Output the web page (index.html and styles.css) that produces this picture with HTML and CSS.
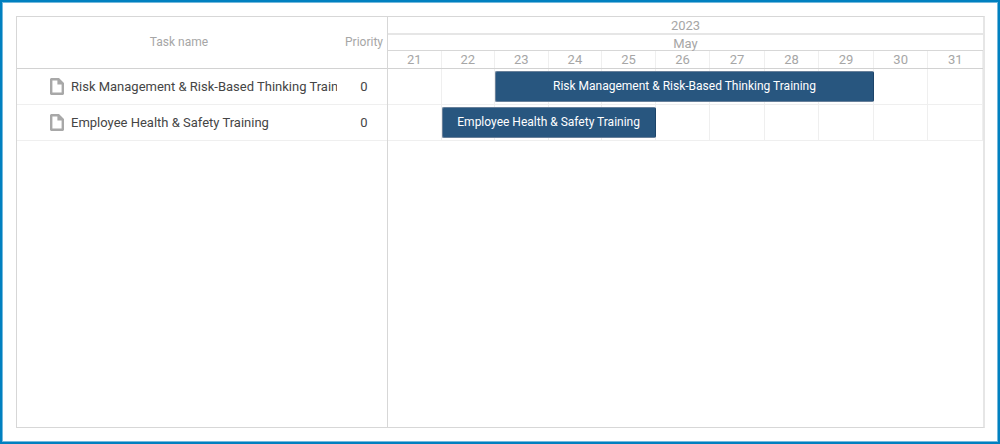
FILE: index.html
```html
<!DOCTYPE html>
<html lang="en">
<head>
    <meta charset="UTF-8">
    <meta name="viewport" content="width=device-width, initial-scale=1.0">
    <title>Training Schedule</title>
    <link rel="stylesheet" href="styles.css">
</head>
<body>

    <div class="page">
        <div class="gantt">

            <div class="grid">
                <table class="task-table">
                    <thead>
                        <tr>
                            <th class="col-name">Task name</th>
                            <th class="col-priority">Priority</th>
                        </tr>
                    </thead>
                    <tbody>
                        <tr>
                            <td class="col-name">
                                <div class="task-name">
                                    <svg class="file-icon" viewBox="0 0 14 17" width="14" height="17"><path fill-rule="evenodd" d="M1 0H9L14 5V16L13 17H1L0 16V1ZM2.4 2.4V14.6H11.6V6.6H7.4V2.4Z"/></svg>
                                    <span>Risk Management &amp; Risk-Based Thinking Training</span>
                                </div>
                            </td>
                            <td class="col-priority">0</td>
                        </tr>
                        <tr>
                            <td class="col-name">
                                <div class="task-name">
                                    <svg class="file-icon" viewBox="0 0 14 17" width="14" height="17"><path fill-rule="evenodd" d="M1 0H9L14 5V16L13 17H1L0 16V1ZM2.4 2.4V14.6H11.6V6.6H7.4V2.4Z"/></svg>
                                    <span>Employee Health &amp; Safety Training</span>
                                </div>
                            </td>
                            <td class="col-priority">0</td>
                        </tr>
                    </tbody>
                </table>
            </div>

            <div class="timeline">
                <div class="scale">
                    <div class="scale-year">2023</div>
                    <div class="scale-month">May</div>
                    <div class="days scale-days">
                        <div>21</div>
                        <div>22</div>
                        <div>23</div>
                        <div>24</div>
                        <div>25</div>
                        <div>26</div>
                        <div>27</div>
                        <div>28</div>
                        <div>29</div>
                        <div>30</div>
                        <div>31</div>
                    </div>
                </div>

                <div class="days task-row">
                    <div class="days cells"><i></i><i></i><i></i><i></i><i></i><i></i><i></i><i></i><i></i><i></i><i></i></div>
                    <div class="bar bar-risk">Risk Management &amp; Risk-Based Thinking Training</div>
                </div>
                <div class="days task-row">
                    <div class="days cells"><i></i><i></i><i></i><i></i><i></i><i></i><i></i><i></i><i></i><i></i><i></i></div>
                    <div class="bar bar-safety">Employee Health &amp; Safety Training</div>
                </div>
            </div>

        </div>
    </div>

</body>
</html>
```
FILE: styles.css
```css
* {
    box-sizing: border-box;
}

body {
    margin: 0;
    font-family: Roboto, "Liberation Sans", sans-serif;
    font-size: 13px;
    color: #454545;
    background-color: #ffffff;
}

.page {
    min-height: 100vh;
    display: flex;
    padding: 14px 13px 14px 14px;
    border: 2px solid #0080c0;
    outline: 1px solid #73b9dd;
    outline-offset: -3px;
}

.gantt {
    flex: 1;
    display: flex;
    border: 1px solid #d7d7d7;
    border-right: 2px solid #e6e6e6;
}

.grid {
    flex: 0 0 371px;
    border-right: 1px solid #d7d7d7;
}

/* task list */
.task-table {
    width: 100%;
    table-layout: fixed;
    border-collapse: separate;
    border-spacing: 0;
}

.task-table th {
    height: 52px;
    padding: 0 0 2px;
    font-size: 12px;
    font-weight: 400;
    color: #a6a6a6;
    text-align: center;
    border-bottom: 1px solid #d2d2d2;
}

.task-table td {
    height: 36px;
    padding: 0;
    border-bottom: 1px solid #efefef;
}

.task-table .col-priority {
    width: 46px;
    text-align: center;
}

.task-name {
    display: flex;
    align-items: center;
    gap: 7px;
    padding-left: 33px;
    padding-right: 4px;
    white-space: nowrap;
}

.task-name span {
    overflow: hidden;
}

.file-icon {
    flex: none;
    fill: #a8a8a8;
}

/* timeline */
.timeline {
    flex: 1;
    min-width: 0;
}

.scale {
    height: 52px;
    display: grid;
    grid-template-rows: 18px 16px 18px;
    color: #a6a6a6;
    text-align: center;
    line-height: 17px;
}

.scale-year {
    border-bottom: 2px solid #e6e6e6;
}

.scale-month {
    border-bottom: 1px solid #d7d7d7;
}

.days {
    display: grid;
    grid-template-columns: repeat(5, 107fr) repeat(6, 109fr);
}

.scale-days {
    border-bottom: 1px solid #d2d2d2;
}

.scale-days div,
.cells i {
    border-right: 1px solid #efefef;
}

.task-row {
    height: 36px;
    border-bottom: 1px solid #efefef;
}

.cells {
    grid-row: 1;
    grid-column: 1 / -1;
}

.bar {
    grid-row: 1;
    height: 31px;
    min-width: 0;
    margin-top: 2px;
    border: 1px solid #68809a;
    border-right-color: #1c4469;
    border-radius: 2px;
    background-color: #28567f;
    color: #ffffff;
    font-size: 12px;
    line-height: 29px;
    text-align: center;
    white-space: nowrap;
    z-index: 1;
}

.bar-risk {
    grid-column: 3 / 10;
}

.bar-safety {
    grid-column: 2 / 6;
}
```
